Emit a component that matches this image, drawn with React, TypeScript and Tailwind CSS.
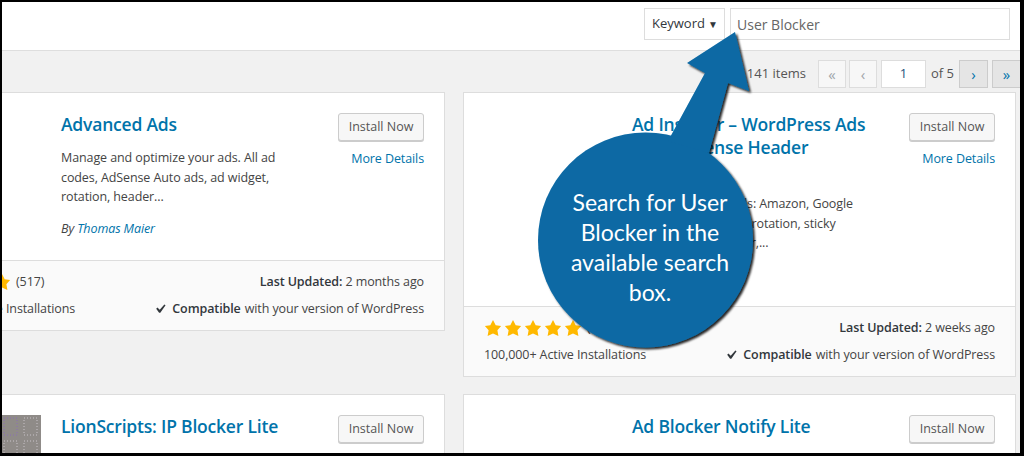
import React from 'react';

type Plugin = {
  title: string[];
  desc: string[];
  author: string;
  icon?: React.ReactNode;
  ratings: string;
  installs: string;
  updated: string;
};

const Star = () => (
  <svg viewBox="0 0 20 20" className="h-[18px] w-[18px] fill-[#ffb900]">
    <path d="M10 1l3 6 6 .75-4.12 4.62L16 19l-6-3-6 3 1.13-6.63L1 7.75 7 7z" />
  </svg>
);

const LionIcon = () => (
  <svg viewBox="0 0 128 128" className="h-[128px] w-[128px]">
    <rect width="128" height="128" fill="#8f8b88" />
    {[4, 24, 44, 64, 84, 104].map((x) =>
      [3, 26, 50, 74, 98].map((y) => (
        <rect
          key={`${x}-${y}`}
          x={x + 87}
          y={y}
          width="13"
          height="17"
          fill="none"
          stroke={x === 4 && y === 3 ? '#8a6fb6' : '#c9c3c9'}
          strokeWidth="1"
          strokeDasharray="1 2"
        />
      ))
    )}
  </svg>
);

const plugins: Plugin[][] = [
  [
    {
      title: ['Advanced Ads'],
      desc: ['Manage and optimize your ads. All ad', 'codes, AdSense Auto ads, ad widget,', 'rotation, header...'],
      author: 'Thomas Maier',
      ratings: '(517)',
      installs: '100,000+ Active Installations',
      updated: '2 months ago',
    },
    {
      title: ['Ad Inserter – WordPress Ads', 'with AdSense Header', 'Integration'],
      desc: ['Insert all kinds of ads: Amazon, Google', 'AdSense, Media.net, rotation, sticky', 'widgets, AMP, header,...'],
      author: 'Igor Funa',
      ratings: '(1,029)',
      installs: '100,000+ Active Installations',
      updated: '2 weeks ago',
    },
  ],
  [
    {
      title: ['LionScripts: IP Blocker Lite'],
      desc: ['Block unwanted visitors by IP address', 'or an IP range from your website.', ''],
      author: 'LionScripts.com',
      icon: <LionIcon />,
      ratings: '(48)',
      installs: '3,000+ Active Installations',
      updated: '4 months ago',
    },
    {
      title: ['Ad Blocker Notify Lite'],
      desc: ['Detect ad blockers and show a notice', 'to your visitors.', ''],
      author: 'Brice Capobianco',
      ratings: '(63)',
      installs: '10,000+ Active Installations',
      updated: '3 months ago',
    },
  ],
];

const PluginCard: React.FC<{ plugin: Plugin }> = ({ plugin }) => (
  <div className="w-[553px] shrink-0 border border-[#dddddd] bg-white">
    <div className="flex px-[20px] pt-[20px] pb-[22px]">
      <div className="-mb-[8px] h-[128px] w-[128px] shrink-0">{plugin.icon}</div>
      <div className="ml-[20px] w-[237px] shrink-0">
        <h3 className="text-[17.5px] font-semibold leading-[23px] tracking-[-0.2px] text-[#0073aa]">
          {plugin.title.map((line) => (
            <span key={line} className="block whitespace-nowrap">{line}</span>
          ))}
        </h3>
        <div className="mt-[12px] text-[12.5px] leading-[19.5px] tracking-[-0.1px] text-[#444]">
          {plugin.desc.map((line, i) => (
            <span key={i} className="block h-[19.5px] whitespace-nowrap">{line}</span>
          ))}
        </div>
        <p className="mt-[12px] text-[12.5px] italic leading-[19.5px] tracking-[-0.1px] text-[#444]">
          By <span className="text-[#0073aa]">{plugin.author}</span>
        </p>
      </div>
      <div className="flex flex-1 flex-col items-end">
        <button className="h-[28px] w-[86px] rounded-[3px] border border-[#cccccc] bg-[#f7f7f7] text-[12.5px] text-[#555] shadow-[0_1px_0_#cccccc]">
          Install Now
        </button>
        <span className="mt-[8px] text-[12.5px] leading-[19.5px] tracking-[-0.1px] text-[#0073aa]">More Details</span>
      </div>
    </div>
    <div className="border-t border-[#dddddd] bg-[#fafafa] px-[20px] pt-[9px] pb-[6px] text-[12.5px] tracking-[-0.1px] text-[#444]">
      <div className="flex h-[24px] items-center justify-between">
        <div className="flex items-center">
          <div className="flex gap-[2px]">
            <Star />
            <Star />
            <Star />
            <Star />
            <Star />
          </div>
          <span className="ml-[5px]">{plugin.ratings}</span>
        </div>
        <span>
          <strong className="font-semibold text-[#32373c]">Last Updated:</strong> {plugin.updated}
        </span>
      </div>
      <div className="flex h-[30px] items-center justify-between">
        <span>{plugin.installs}</span>
        <span className="flex items-center">
          <svg viewBox="0 0 20 20" className="mr-[3px] h-[18px] w-[18px] fill-[#32373c]">
            <path d="M14.83 4.89l1.34.94-5.81 8.38H9.02L5.78 9.67l1.34-1.25 2.57 2.4z" />
          </svg>
          <strong className="mr-[4px] font-semibold text-[#32373c]">Compatible</strong> with your version of WordPress
        </span>
      </div>
    </div>
  </div>
);

const PageButton: React.FC<{ label: string; enabled?: boolean; className?: string }> = ({ label, enabled, className }) => (
  <span
    className={`flex h-[28px] items-center justify-center border text-[15px] ${
      enabled
        ? 'w-[29px] border-[#cccccc] bg-[#e5e5e5] text-[#0073aa]'
        : 'w-[28px] border-[#dddddd] bg-[#f7f7f7] text-[#a0a5aa]'
    } ${className ?? ''}`}
  >
    {label}
  </span>
);

const App: React.FC = () => {
  return (
    <div className="relative h-[456px] w-[1024px] overflow-hidden bg-[#f1f1f1] font-['Open_Sans',sans-serif] text-[13px] text-[#444]">
      {/* Search filter bar */}
      <div className="flex h-[51px] items-start justify-end gap-[5px] border-b border-[#dedede] bg-white pt-[8px] pr-[14px]">
        <div className="flex h-[32px] w-[81px] items-center justify-between border border-[#dddddd] bg-white pr-[6px] pl-[7px] text-[13px] text-[#32373c]">
          Keyword <span className="text-[10px]">▼</span>
        </div>
        <div className="flex h-[32px] w-[280px] items-center border border-[#dddddd] bg-white px-[6px] text-[14px] text-[#666]">
          User Blocker
        </div>
      </div>

      {/* Pagination */}
      <div className="mt-[9px] flex h-[28px] items-center justify-end pr-[3px] text-[13px] text-[#555]">
        <span className="mr-[12px]">141 items</span>
        <PageButton label="«" className="mr-[3px]" />
        <PageButton label="‹" className="mr-[4px]" />
        <span className="mr-[5px] flex h-[28px] w-[45px] items-center justify-center border border-[#dddddd] bg-white text-[#23527c]">
          1
        </span>
        <span className="mr-[5px]">of 5</span>
        <PageButton label="›" enabled className="mr-[4px]" />
        <PageButton label="»" enabled />
      </div>

      {/* Plugin cards */}
      <div className="mt-[4px] ml-[-108px] flex flex-col gap-[17px]">
        {plugins.map((row, i) => (
          <div key={i} className="flex items-start gap-[18px]">
            {row.map((p) => (
              <PluginCard key={p.title[0]} plugin={p} />
            ))}
          </div>
        ))}
      </div>

      {/* Callout bubble */}
      <svg className="pointer-events-none absolute top-0 left-0" width="1024" height="456" viewBox="0 0 1024 456">
        <defs>
          <filter id="bubbleShadow" x="-20%" y="-20%" width="140%" height="140%">
            <feDropShadow dx="2" dy="2" stdDeviation="1" floodColor="#000" floodOpacity="0.85" />
          </filter>
        </defs>
        <g filter="url(#bubbleShadow)" fill="#0a69a4">
          <circle cx="645.5" cy="240" r="107.5" />
          <polygon points="668,141 705,73 687,63 735,32 749,91 728,83 709,153" />
        </g>
      </svg>
      <div className="pointer-events-none absolute top-[187px] left-[550px] w-[200px] text-center font-['Lato',sans-serif] text-[23px] leading-[30px] text-white">
        Search for User
        <br />
        Blocker in the
        <br />
        available search
        <br />
        box.
      </div>

      {/* Screenshot frame */}
      <div className="pointer-events-none absolute inset-0 border-t-2 border-r-4 border-b-[3px] border-l-2 border-black" />
    </div>
  );
};

export default App;
